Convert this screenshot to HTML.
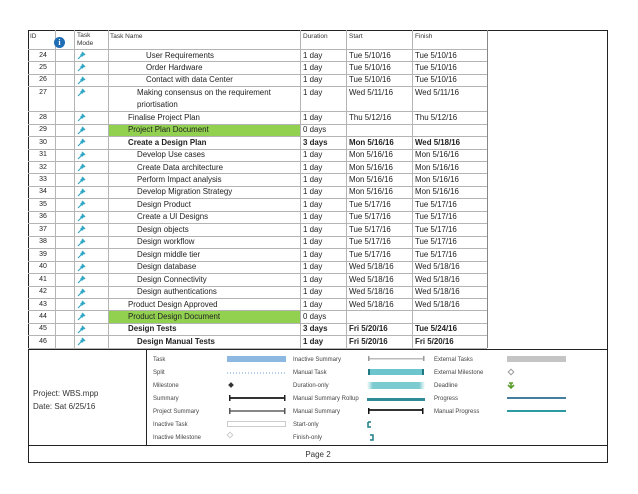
<!DOCTYPE html>
<html><head><meta charset="utf-8"><style>
body{margin:0;width:638px;height:494px;background:#fff;position:relative;overflow:hidden;font-family:"Liberation Sans",sans-serif;color:#222}
.a{position:absolute}
.hl{position:absolute;height:1px;background:#b4b4b4}
.vl{position:absolute;width:1px;background:#b4b4b4}
.t{position:absolute;font-size:7.9px;white-space:nowrap;line-height:12px}
.b{font-weight:bold}
.h{position:absolute;font-size:6.5px;line-height:8px;color:#333}
.lg{position:absolute;font-size:6px;color:#444;white-space:nowrap;line-height:8px}
</style></head><body>
<div class="a" style="left:28px;top:30px;width:580px;height:433px;border:1px solid #222;box-sizing:border-box"></div>
<div class="a" style="left:28px;top:349px;width:580px;height:1px;background:#222"></div>
<div class="a" style="left:28px;top:445px;width:580px;height:1px;background:#222"></div>
<div class="a" style="left:146px;top:349px;width:1px;height:96px;background:#222"></div>
<div class="vl" style="left:487px;top:30px;height:318px;background:#888"></div>
<div class="vl" style="left:55px;top:30px;height:318px"></div>
<div class="vl" style="left:74px;top:30px;height:318px"></div>
<div class="vl" style="left:108px;top:30px;height:318px"></div>
<div class="vl" style="left:300px;top:30px;height:318px"></div>
<div class="vl" style="left:346px;top:30px;height:318px"></div>
<div class="vl" style="left:412px;top:30px;height:318px"></div>
<div class="h" style="left:30px;top:33px">ID</div>
<div class="a" style="left:54px;top:37px;width:11px;height:11px;border-radius:50%;background:#1f6db5;color:#fff;font:bold 8px/11px 'Liberation Serif',serif;text-align:center">i</div>
<div class="h" style="left:77px;top:32px">Task<br>Mode</div>
<div class="h" style="left:110px;top:33px">Task Name</div>
<div class="h" style="left:303px;top:33px">Duration</div>
<div class="h" style="left:349px;top:33px">Start</div>
<div class="h" style="left:415px;top:33px">Finish</div>
<div id="rows"></div>
<script>
var R=[["24","User Requirements",146,0,"1 day","Tue 5/10/16","Tue 5/10/16"],
["25","Order Hardware",146,0,"1 day","Tue 5/10/16","Tue 5/10/16"],
["26","Contact with data Center",146,0,"1 day","Tue 5/10/16","Tue 5/10/16"],
["27","Making consensus on the requirement<br>priortisation",137,0,"1 day","Wed 5/11/16","Wed 5/11/16",2],
["28","Finalise Project Plan",128,0,"1 day","Thu 5/12/16","Thu 5/12/16"],
["29","Project Plan Document",128,2,"0 days","",""],
["30","Create a Design Plan",128,1,"3 days","Mon 5/16/16","Wed 5/18/16"],
["31","Develop Use cases",137,0,"1 day","Mon 5/16/16","Mon 5/16/16"],
["32","Create Data architecture",137,0,"1 day","Mon 5/16/16","Mon 5/16/16"],
["33","Perform Impact analysis",137,0,"1 day","Mon 5/16/16","Mon 5/16/16"],
["34","Develop Migration Strategy",137,0,"1 day","Mon 5/16/16","Mon 5/16/16"],
["35","Design Product",137,0,"1 day","Tue 5/17/16","Tue 5/17/16"],
["36","Create a UI Designs",137,0,"1 day","Tue 5/17/16","Tue 5/17/16"],
["37","Design objects",137,0,"1 day","Tue 5/17/16","Tue 5/17/16"],
["38","Design workflow",137,0,"1 day","Tue 5/17/16","Tue 5/17/16"],
["39","Design middle tier",137,0,"1 day","Tue 5/17/16","Tue 5/17/16"],
["40","Design database",137,0,"1 day","Wed 5/18/16","Wed 5/18/16"],
["41","Design Connectivity",137,0,"1 day","Wed 5/18/16","Wed 5/18/16"],
["42","Design authentications",137,0,"1 day","Wed 5/18/16","Wed 5/18/16"],
["43","Product Design Approved",128,0,"1 day","Wed 5/18/16","Wed 5/18/16"],
["44","Product Design Document",128,2,"0 days","",""],
["45","Design Tests",128,1,"3 days","Fri 5/20/16","Tue 5/24/16"],
["46","Design Manual Tests",137,1,"1 day","Fri 5/20/16","Fri 5/20/16"]];
var u=12.45,y=49,h='';
h+='<div class="hl" style="left:28px;width:459px;top:49px"></div>';
R.forEach(function(r){var n=r[7]||1,H=u*n;var b=r[3]==1?' b':'';
if(r[3]==2)h+='<div class="a" style="left:109px;top:'+(y+1)+'px;width:191px;height:'+(H-1)+'px;background:#92d050"></div>';
h+='<div class="t" style="left:36px;width:14px;text-align:center;top:'+(y+0.5)+'px;font-size:7px">'+r[0]+'</div>';
h+='<svg class="a" style="left:77px;top:'+(y+2)+'px" width="9" height="9" viewBox="0 0 9 9"><path d="M1 8 L4 5" stroke="#3aa6c0" stroke-width="1.2"/><path d="M3 4 L5 2 L7 2 L7 4 L5 6 Z" fill="#2aa8c8"/><path d="M5 1 L8 4" stroke="#3aa6c0" stroke-width="1.4"/></svg>';
h+='<div class="t'+b+'" style="left:'+r[2]+'px;top:'+(y+0.5)+'px;line-height:12.4px">'+r[1]+'</div>';
h+='<div class="t'+b+'" style="left:303px;top:'+(y+0.5)+'px">'+r[4]+'</div>';
h+='<div class="t'+b+'" style="left:349px;top:'+(y+0.5)+'px">'+r[5]+'</div>';
h+='<div class="t'+b+'" style="left:415px;top:'+(y+0.5)+'px">'+r[6]+'</div>';
y+=H;h+='<div class="hl" style="left:28px;width:459px;top:'+Math.round(y)+'px"></div>';});
document.getElementById('rows').innerHTML=h;
</script>
<div class="a" style="left:33px;top:387px;font-size:8px;line-height:13px;color:#333">Project: WBS.mpp<br>Date: Sat 6/25/16</div>
<div class="lg" style="left:153px;top:356px">Task</div>
<div class="lg" style="left:153px;top:369px">Split</div>
<div class="lg" style="left:153px;top:382px">Milestone</div>
<div class="lg" style="left:153px;top:395px">Summary</div>
<div class="lg" style="left:153px;top:408px">Project Summary</div>
<div class="lg" style="left:153px;top:421px">Inactive Task</div>
<div class="lg" style="left:153px;top:434px">Inactive Milestone</div>
<div class="lg" style="left:293px;top:356px">Inactive Summary</div>
<div class="lg" style="left:293px;top:369px">Manual Task</div>
<div class="lg" style="left:293px;top:382px">Duration-only</div>
<div class="lg" style="left:293px;top:395px">Manual Summary Rollup</div>
<div class="lg" style="left:293px;top:408px">Manual Summary</div>
<div class="lg" style="left:293px;top:421px">Start-only</div>
<div class="lg" style="left:293px;top:434px">Finish-only</div>
<div class="lg" style="left:434px;top:356px">External Tasks</div>
<div class="lg" style="left:434px;top:369px">External Milestone</div>
<div class="lg" style="left:434px;top:382px">Deadline</div>
<div class="lg" style="left:434px;top:395px">Progress</div>
<div class="lg" style="left:434px;top:408px">Manual Progress</div>
<svg class="a" style="left:0;top:0" width="638" height="494">
<rect x="227" y="356" width="59" height="6" fill="#8db8e2"/>
<line x1="227" y1="373" x2="286" y2="373" stroke="#6b9ccf" stroke-dasharray="1,2"/>
<rect x="229" y="383" width="4" height="4" fill="#333" transform="rotate(45 231 385)"/>
<rect x="230" y="397" width="54" height="2" fill="#333"/><rect x="229" y="395" width="1.5" height="6" fill="#222"/><rect x="284" y="395" width="1.5" height="6" fill="#222"/>
<rect x="230" y="410" width="54" height="2" fill="#888"/><rect x="229" y="408" width="1.5" height="6" fill="#555"/><rect x="284" y="408" width="1.5" height="6" fill="#555"/>
<rect x="227.5" y="421.5" width="58" height="5" fill="none" stroke="#ccc"/>
<rect x="228" y="433" width="4" height="4" fill="none" stroke="#ccc" transform="rotate(45 230 435)"/>
<rect x="369" y="358" width="54" height="1.5" fill="#bbb"/><rect x="368" y="356" width="1.5" height="5" fill="#999"/><rect x="423" y="356" width="1.5" height="5" fill="#999"/>
<rect x="368" y="369" width="56" height="6" fill="#6cc4cc"/><rect x="368" y="369" width="2" height="6" fill="#1f7a80"/><rect x="422" y="369" width="2" height="6" fill="#1f7a80"/>
<defs><linearGradient id="g"><stop offset="0" stop-color="#fff"/><stop offset=".1" stop-color="#7ccbd1"/><stop offset=".9" stop-color="#7ccbd1"/><stop offset="1" stop-color="#fff"/></linearGradient></defs>
<rect x="367" y="382" width="58" height="7" fill="url(#g)"/>
<rect x="367" y="398" width="58" height="3" fill="#2f8c96"/>
<rect x="369" y="409" width="54" height="2" fill="#333"/><rect x="368" y="408" width="1.5" height="6" fill="#111"/><rect x="422" y="408" width="1.5" height="6" fill="#111"/>
<path d="M368 422 h3 M368 422 v5 h3" stroke="#1a7f86" stroke-width="1.5" fill="none"/>
<path d="M370 435 h3 v5 h-3" stroke="#1a7f86" stroke-width="1.5" fill="none"/>
<rect x="507" y="356" width="59" height="6" fill="#c4c4c4"/>
<rect x="509" y="370" width="4" height="4" fill="none" stroke="#999" transform="rotate(45 511 372)"/>
<path d="M509 383 h4 M511 383 v4 M508 385 l3 3 l3 -3" stroke="#5a9e2a" stroke-width="1.6" fill="none"/>
<rect x="507" y="397" width="59" height="2" fill="#467e9e"/>
<rect x="507" y="410" width="59" height="2" fill="#2c9aa0"/>
</svg>
<div class="a" style="left:28px;top:450px;width:580px;text-align:center;font-size:8px;color:#333">Page 2</div>
</body></html>
